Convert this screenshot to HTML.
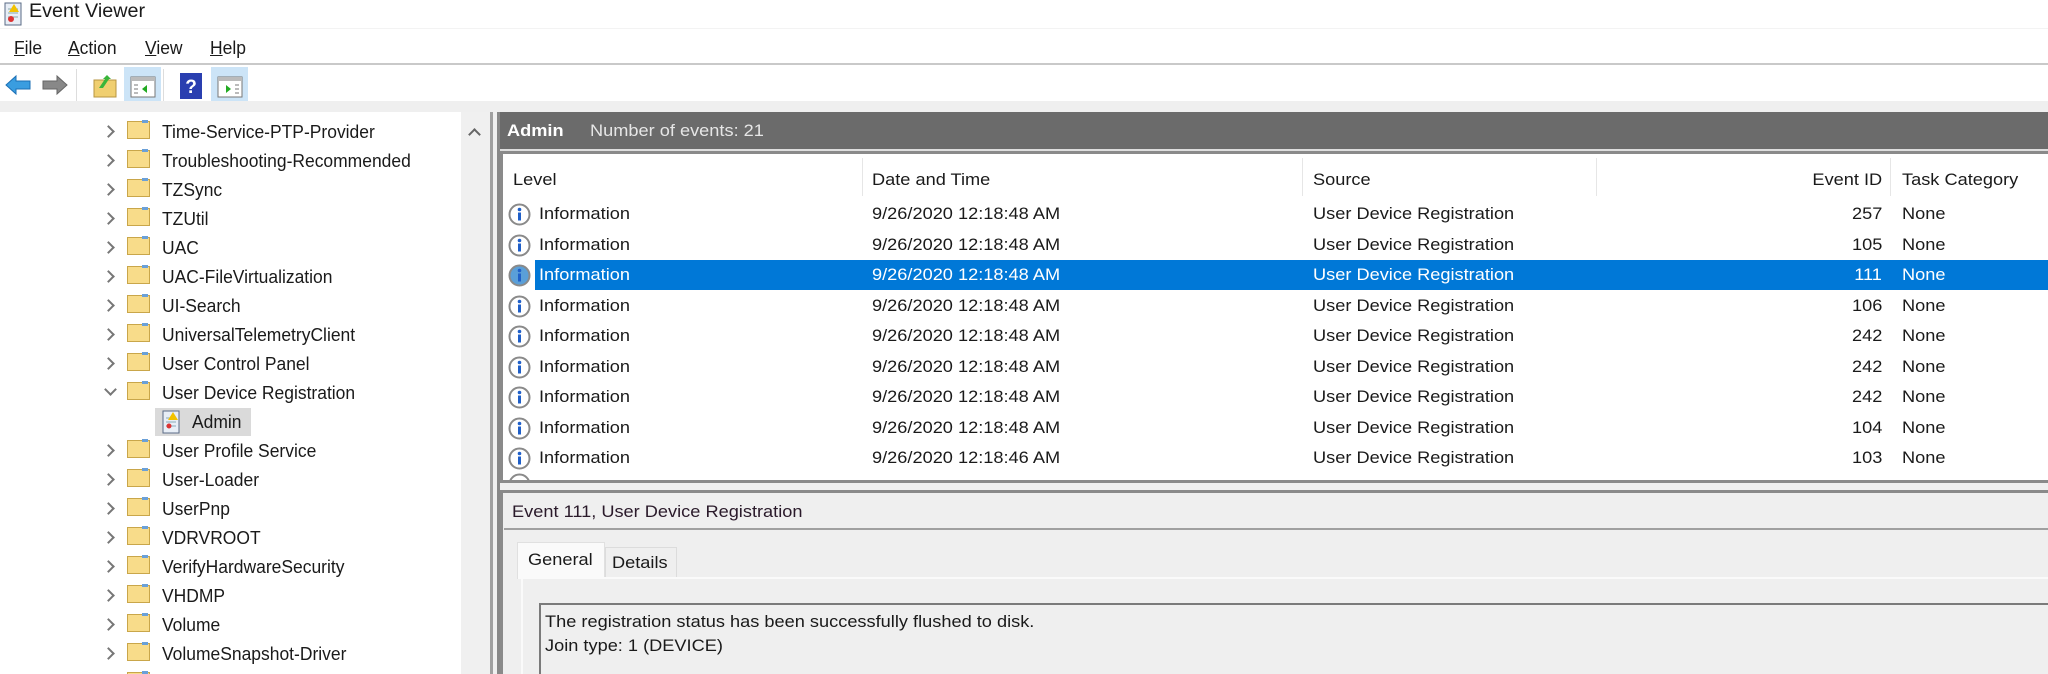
<!DOCTYPE html>
<html><head><meta charset="utf-8"><style>
*{margin:0;padding:0;box-sizing:border-box}
html,body{width:2048px;height:674px;overflow:hidden}
body{background:#fff;font-family:"Liberation Sans",Arial,sans-serif;color:#1a1a1a;position:relative}
.a{position:absolute;white-space:nowrap}
.t{position:absolute;white-space:nowrap;font-size:18px;line-height:20px;transform:scaleX(.97);transform-origin:left center}
.l{position:absolute;white-space:nowrap;font-size:17px;line-height:20px;transform:scaleX(1.07);transform-origin:left center}
.r{transform-origin:right center;text-align:right}
.chev{position:absolute;width:9px;height:9px;border-right:2px solid #777;border-bottom:2px solid #777;transform:rotate(-45deg)}
.fold{position:absolute;width:23px;height:20px}
u{text-decoration:underline}
</style></head><body>
<svg class="a" style="left:3px;top:2px" width="20" height="24" viewBox="0 0 20 24"><rect x="2" y="1" width="16" height="22" fill="#e8eef6" stroke="#5a6b85"/><line x1="5" y1="7" x2="15" y2="7" stroke="#8aa"/><line x1="5" y1="11" x2="15" y2="11" stroke="#8aa"/><line x1="5" y1="15" x2="15" y2="15" stroke="#8aa"/><polygon points="11,2 16,10 6,10" fill="#f2c200"/><circle cx="8" cy="17" r="3" fill="#d33"/></svg>
<div class="t" style="left:29px;top:2px;font-size:19px;transform:scaleX(1.04)">Event Viewer</div>
<div class="a" style="left:0;top:28px;width:2048px;height:1px;background:#f3f3f3"></div>
<div class="t" style="left:14px;top:38px"><u>F</u>ile</div>
<div class="t" style="left:68px;top:38px"><u>A</u>ction</div>
<div class="t" style="left:145px;top:38px"><u>V</u>iew</div>
<div class="t" style="left:210px;top:38px"><u>H</u>elp</div>
<div class="a" style="left:0;top:63px;width:2048px;height:2px;background:#c9c9c9"></div>
<svg class="a" style="left:4px;top:73px" width="28" height="24" viewBox="0 0 28 24"><path d="M2 12 L12 3 L12 8 L26 8 L26 16 L12 16 L12 21 Z" fill="#3a9de0" stroke="#1b6fb5"/></svg>
<svg class="a" style="left:41px;top:73px" width="28" height="24" viewBox="0 0 28 24"><path d="M26 12 L16 3 L16 8 L2 8 L2 16 L16 16 L16 21 Z" fill="#888" stroke="#666"/></svg>
<div class="a" style="left:76px;top:69px;width:1px;height:32px;background:#ddd"></div>
<svg class="a" style="left:93px;top:74px" width="24" height="24" viewBox="0 0 24 24"><rect x="1" y="6" width="22" height="17" fill="#f0cf70" stroke="#b79540"/><path d="M6 14 L12 5 L10 5 L14 1 L18 5 L16 5 L10 14 Z" fill="#3ab53a"/></svg>
<div class="a" style="left:124px;top:67px;width:37px;height:35px;background:#cce4f7"></div>
<svg class="a" style="left:130px;top:76px" width="26" height="22" viewBox="0 0 26 22"><rect x="1" y="1" width="24" height="20" fill="#fff" stroke="#777"/><rect x="1" y="1" width="24" height="4" fill="#bbb"/><polygon points="17,9 17,17 12,13" fill="#2a2"/><line x1="4" y1="9" x2="8" y2="9" stroke="#777"/><line x1="4" y1="13" x2="8" y2="13" stroke="#777"/><line x1="4" y1="17" x2="8" y2="17" stroke="#777"/></svg>
<div class="a" style="left:163px;top:69px;width:1px;height:32px;background:#ddd"></div>
<svg class="a" style="left:180px;top:73px" width="22" height="26" viewBox="0 0 22 26"><rect x="0" y="0" width="22" height="26" fill="#2a3fb0"/><text x="11" y="20" font-size="19" font-weight="bold" fill="#fff" text-anchor="middle" font-family="Liberation Sans">?</text></svg>
<div class="a" style="left:211px;top:67px;width:37px;height:35px;background:#cce4f7"></div>
<svg class="a" style="left:217px;top:76px" width="26" height="22" viewBox="0 0 26 22"><rect x="1" y="1" width="24" height="20" fill="#fff" stroke="#777"/><rect x="1" y="1" width="24" height="4" fill="#bbb"/><polygon points="9,9 9,17 14,13" fill="#2a2"/><line x1="18" y1="9" x2="22" y2="9" stroke="#777"/><line x1="18" y1="13" x2="22" y2="13" stroke="#777"/><line x1="18" y1="17" x2="22" y2="17" stroke="#777"/></svg>
<div class="a" style="left:0;top:101px;width:2048px;height:11px;background:#efefef"></div>
<div class="a" style="left:0;top:112px;width:461px;height:562px;background:#fff"></div>
<div class="a" style="left:461px;top:112px;width:29px;height:562px;background:#f0f0f0"></div>
<div class="chev" style="left:470px;top:130px;transform:rotate(-135deg);border-color:#666"></div>
<div class="a" style="left:490px;top:112px;width:3px;height:562px;background:#a0a0a0"></div>
<div class="a" style="left:493px;top:112px;width:4px;height:562px;background:#f0f0f0"></div>
<div class="a" style="left:497px;top:112px;width:3px;height:562px;background:#888"></div>
<div id="tree" class="a" style="left:0;top:0;width:461px;height:674px;overflow:hidden"></div>
<div class="a" style="left:500px;top:112px;width:1548px;height:37px;background:#6b6b6b"></div>
<div class="l" style="left:507px;top:121px;color:#fff;font-weight:bold">Admin</div>
<div class="l" style="left:590px;top:121px;color:#e6e6e6">Number of events: 21</div>
<div class="a" style="left:500px;top:149px;width:1548px;height:2px;background:#ddd"></div>
<div class="a" style="left:500px;top:151px;width:1548px;height:3px;background:#8a8a8a"></div>
<div class="a" style="left:500px;top:154px;width:3px;height:326px;background:#8a8a8a"></div>
<div class="a" style="left:503px;top:154px;width:1545px;height:326px;background:#fff"></div>
<div class="a" style="left:862px;top:158px;width:1px;height:38px;background:#e6e6e6"></div>
<div class="a" style="left:1302px;top:158px;width:1px;height:38px;background:#e6e6e6"></div>
<div class="a" style="left:1596px;top:158px;width:1px;height:38px;background:#e6e6e6"></div>
<div class="a" style="left:1890px;top:158px;width:1px;height:38px;background:#e6e6e6"></div>
<div class="l" style="left:513px;top:170px">Level</div>
<div class="l" style="left:872px;top:170px">Date and Time</div>
<div class="l" style="left:1313px;top:170px">Source</div>
<div class="l r" style="right:166px;top:170px">Event ID</div>
<div class="l" style="left:1902px;top:170px">Task Category</div>
<div id="rows"></div>
<div class="a" style="left:500px;top:480px;width:1548px;height:3px;background:#8a8a8a"></div>
<div class="a" style="left:500px;top:483px;width:1548px;height:191px;background:#efefef;overflow:hidden">
<div class="a" style="left:0;top:7px;width:1548px;height:3px;background:#8a8a8a"></div>
<div class="a" style="left:0;top:10px;width:3px;height:200px;background:#8a8a8a"></div>
<div class="l" style="left:12px;top:19px;color:#2a1a2a">Event 111, User Device Registration</div>
<div class="a" style="left:4px;top:45px;width:1544px;height:2px;background:#a0a0a0"></div>
<div class="a" style="left:17px;top:59px;width:88px;height:37px;background:#fafafa;border:1px solid #e0e0e0;border-bottom:none"></div>
<div class="l" style="left:28px;top:67px">General</div>
<div class="a" style="left:105px;top:64px;width:72px;height:31px;border:1px solid #dcdcdc;border-bottom:none"></div>
<div class="l" style="left:112px;top:70px">Details</div>
<div class="a" style="left:21px;top:94px;width:1527px;height:2px;background:#fafafa"></div>
<div class="a" style="left:21px;top:94px;width:2px;height:100px;background:#fafafa"></div>
<div class="a" style="left:39px;top:120px;width:1509px;height:80px;border-top:2px solid #7a7a7a;border-left:2px solid #7a7a7a;background:#efefef"></div>
<div class="l" style="left:45px;top:129px">The registration status has been successfully flushed to disk.</div>
<div class="l" style="left:45px;top:153px">Join type: 1 (DEVICE)</div>
</div>
<script>
var names=["Time-Service-PTP-Provider","Troubleshooting-Recommended","TZSync","TZUtil","UAC","UAC-FileVirtualization","UI-Search","UniversalTelemetryClient","User Control Panel","User Device Registration","Admin","User Profile Service","User-Loader","UserPnp","VDRVROOT","VerifyHardwareSecurity","VHDMP","Volume","VolumeSnapshot-Driver",""];
var h="";
names.forEach(function(n,i){var y=132+i*29;
if(n=="Admin"){h+='<div class="a" style="left:155px;top:'+(y-14)+'px;width:96px;height:28px;background:#dadada"></div>';
h+='<svg class="a" style="left:160px;top:'+(y-12)+'px" width="22" height="24" viewBox="0 0 22 24"><rect x="3" y="1" width="16" height="22" fill="#e8eef6" stroke="#5a6b85"/><line x1="6" y1="8" x2="16" y2="8" stroke="#8ab"/><line x1="6" y1="12" x2="16" y2="12" stroke="#8ab"/><line x1="6" y1="16" x2="16" y2="16" stroke="#8ab"/><polygon points="13,2 18,10 8,10" fill="#f2c200"/><circle cx="9" cy="16" r="2.5" fill="#d33"/></svg>';
h+='<div class="t" style="left:192px;top:'+(y-10)+'px">Admin</div>';return;}
if(i==9)h+='<div class="chev" style="left:106px;top:'+(y-8)+'px;transform:rotate(45deg)"></div>';
else if(n)h+='<div class="chev" style="left:104px;top:'+(y-5)+'px"></div>';
h+='<svg class="fold" style="left:127px;top:'+(y-13)+'px" viewBox="0 0 23 20"><rect x="0.5" y="2.5" width="22" height="17" fill="#f8dc8a" stroke="#c9a64a"/><rect x="15" y="1" width="6" height="3" fill="#6aa0d8"/></svg>';
if(n)h+='<div class="t" style="left:162px;top:'+(y-10)+'px">'+n+'</div>';});
document.getElementById('tree').innerHTML=h;
var ids=[257,105,111,106,242,242,242,104,103],r="";
ids.forEach(function(id,i){var top=199+i*30.5,sel=i==2,c=sel?'color:#fff;':'';
if(sel)r+='<div class="a" style="left:535px;top:'+top+'px;width:1513px;height:30px;background:#0078d7"></div>';
r+='<svg class="a" style="left:508px;top:'+(top+4)+'px" width="23" height="23" viewBox="0 0 23 23"><circle cx="11.5" cy="11.5" r="10" fill="'+(sel?'#5a9fd8':'#fff')+'" stroke="#8a8a8a" stroke-width="2"/><circle cx="11.5" cy="6.5" r="1.8" fill="#1f5fc8"/><rect x="10" y="9.5" width="3" height="8" fill="#1f5fc8"/></svg>';
var ty=top+5;
r+='<div class="l" style="left:539px;top:'+ty+'px;'+c+'">Information</div>';
r+='<div class="l" style="left:872px;top:'+ty+'px;'+c+'">9/26/2020 12:18:'+(i==8?'46':'48')+' AM</div>';
r+='<div class="l" style="left:1313px;top:'+ty+'px;'+c+'">User Device Registration</div>';
r+='<div class="l r" style="right:166px;top:'+ty+'px;'+c+'">'+id+'</div>';
r+='<div class="l" style="left:1902px;top:'+ty+'px;'+c+'">None</div>';});
r+='<svg class="a" style="left:508px;top:473px" width="23" height="7" viewBox="0 0 23 7"><circle cx="11.5" cy="11.5" r="10" fill="#fff" stroke="#8a8a8a" stroke-width="2"/></svg>';
document.getElementById('rows').innerHTML=r;
</script>
</body></html>
